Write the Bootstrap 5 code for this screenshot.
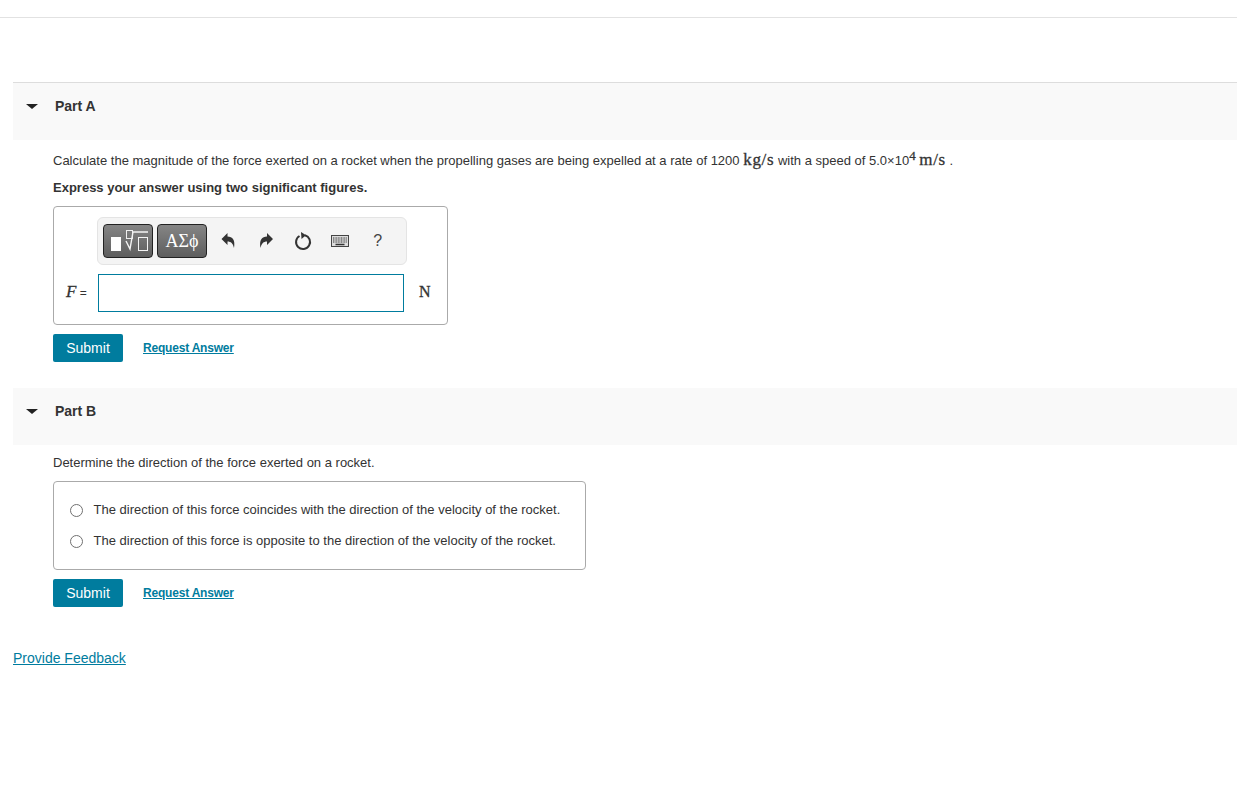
<!DOCTYPE html>
<html lang="en">
<head>
<meta charset="utf-8">
<title>Part A and Part B</title>
<link href="https://cdn.jsdelivr.net/npm/bootstrap@5.3.0/dist/css/bootstrap.min.css" rel="stylesheet">
<style>
body{font-family:"Liberation Sans",Arial,sans-serif;font-size:13px;line-height:18px;color:#333;background:#fff;height:790px;overflow:hidden}
.top-rule{height:18px;border-bottom:1px solid #e2e2e2}
.sheet{padding:64px 0 0 13px}
.part-head{height:58px;background:#f9f9f9;padding:14px 0 0 13px;font-size:14px;font-weight:700;color:#333}
.part-a{border-top:1px solid #ddd}
.caret-mark{width:0;height:0;border-left:6px solid transparent;border-right:6px solid transparent;border-top:5px solid #222;margin-right:17px;margin-top:7px}
.part-body{padding:12px 0 0 40px}
.prompt-line{height:18px;white-space:nowrap}
.mth{font-family:"Liberation Serif",serif;font-size:17px;line-height:0;color:#333;-webkit-text-stroke:.3px #333;letter-spacing:.7px}
.sup4{font-size:13px;position:relative;top:-5px;line-height:0;letter-spacing:0}
.hint{font-weight:700;margin-top:9px}
.answer-box{width:395px;height:119px;margin-top:9px;border:1px solid #aaa;border-radius:4px;padding:10px 0 0 11px}
.toolbar{margin-left:32px;width:310px;height:48px;background:#f4f4f4;border:1px solid #e4e4e4;border-radius:6px;padding:6px 5px}
.tool-dark{height:34px;flex:none;border:1px solid #222;border-radius:4px;background:linear-gradient(#858585,#5e5e5e);color:#fff;padding:0;line-height:1}
.tool-tmpl{width:50px;margin-right:4px}
.tool-grk{width:50px;font-family:"Liberation Serif",serif;font-size:18px}
.tool-slots{margin-left:2px}
.tool-slot{width:37.5px;flex:none;display:flex;justify-content:center;align-items:center;height:34px;color:#444;font-size:16px}
.answer-row{margin-top:9px;height:38px}
.var-label{width:32px;margin-left:1px;margin-bottom:2px;font-size:12px;white-space:nowrap}
.var-label i{font-family:"Liberation Serif",serif;font-size:17px;-webkit-text-stroke:.3px #333}
.answer-input{width:306px;height:38px;flex:none;border:1px solid #007c9e;border-radius:0;background:#fff}
.unit{font-family:"Liberation Serif",serif;font-size:16px;margin-left:15px;margin-bottom:2px;color:#333;-webkit-text-stroke:.3px #333}
.act-row{margin-top:9px;height:28px}
.btn-send{width:70px;height:28px;padding:0;background:#007c9e;border:0;border-radius:2px;color:#fff;font-size:14px;font-weight:400;line-height:28px}
.btn-send:hover{background:#007c9e;color:#fff}
.req-link{margin-left:20px;font-size:12px;letter-spacing:-.2px;font-weight:700;color:#007c9e;text-decoration:underline}
.part-b{margin-top:26px;height:57px}
.q-text{margin-top:-3px}
.choice-box{width:533px;height:89px;margin-top:9px;border:1px solid #aaa;border-radius:4px;padding:19px 0 0 16px}
.choice-line{height:31px;display:flex;align-items:flex-start}
.radio-mark{width:13px;height:13px;margin:3px 10.5px 0 0;border:1.5px solid #707070;border-radius:50%;flex:none}
.feedback{display:block;margin:41px 0 0 0;font-size:14px;line-height:20px;color:#007c9e;text-decoration:underline}
</style>
</head>
<body>
<div class="top-rule"></div>
<div class="sheet">
  <div class="part-head part-a d-flex align-items-start"><span class="caret-mark"></span><span>Part A</span></div>
  <div class="part-body">
    <div class="prompt-line">Calculate the magnitude of the force exerted on a rocket when the propelling gases are being expelled at a rate of 1200 <span class="mth">kg/s</span> with a speed of 5.0×10<span class="mth sup4">4</span> <span class="mth">m/s</span> .</div>
    <div class="hint">Express your answer using two significant figures.</div>
    <div class="answer-box">
      <div class="toolbar d-flex">
        <button type="button" class="tool-dark tool-tmpl" aria-label="Templates">
          <svg width="48" height="32" viewBox="0 0 48 32"><rect x="7" y="12" width="10" height="14" fill="#fff"/><rect x="22.500" y="5.500" width="6" height="8" fill="none" stroke="#f0f0f0"/><path d="M22 16l4 8 3-17h15" fill="none" stroke="#f4f4f4" stroke-width="1.400"/><rect x="34.500" y="12.500" width="9" height="13" fill="none" stroke="#f4f4f4"/></svg>
        </button>
        <button type="button" class="tool-dark tool-grk">ΑΣϕ</button>
        <div class="tool-slots d-flex">
          <div class="tool-slot"><svg width="20" height="16" viewBox="-3.500 0 20 16"><path d="M0 6l6-6v3.500c5 0 8 3.500 6.500 11.500-1-4.500-3-6.500-6.500-6.500V12z" fill="#333"/></svg></div>
          <div class="tool-slot"><svg width="20" height="16" viewBox="-5 0 20 16"><path d="M13 6L7 0v3.500C2 3.500-1 7 .5 15c1-4.500 3-6.500 6.500-6.500V12z" fill="#333"/></svg></div>
          <div class="tool-slot"><svg width="18" height="20" viewBox="0 0 18 20"><path d="M11 4.300A7 7 0 1 1 5.500 5" fill="none" stroke="#333" stroke-width="2"/><path d="M7 1l5 3.300-4.500 3.700z" fill="#333"/></svg></div>
          <div class="tool-slot"><svg width="18" height="12" viewBox="0 0 18 12"><rect x=".5" y=".5" width="17" height="11" fill="#ddd" stroke="#444"/><path d="M2 3h14M2 5h14M2 7h14" stroke="#333" stroke-dasharray="1 .6"/><path d="M4.500 9.500h9" stroke="#333" stroke-width="1.500"/></svg></div>
          <div class="tool-slot">?</div>
        </div>
      </div>
      <div class="answer-row d-flex align-items-center">
        <span class="var-label"><i>F</i> =</span>
        <input class="answer-input" type="text" aria-label="F">
        <span class="unit">N</span>
      </div>
    </div>
    <div class="act-row d-flex align-items-center">
      <button type="button" class="btn btn-send">Submit</button>
      <a class="req-link" href="#">Request Answer</a>
    </div>
  </div>
  <div class="part-head part-b d-flex align-items-start"><span class="caret-mark"></span><span>Part B</span></div>
  <div class="part-body">
    <div class="q-text">Determine the direction of the force exerted on a rocket.</div>
    <div class="choice-box">
      <div class="choice-line"><span class="radio-mark"></span><span>The direction of this force coincides with the direction of the velocity of the rocket.</span></div>
      <div class="choice-line"><span class="radio-mark"></span><span>The direction of this force is opposite to the direction of the velocity of the rocket.</span></div>
    </div>
    <div class="act-row d-flex align-items-center">
      <button type="button" class="btn btn-send">Submit</button>
      <a class="req-link" href="#">Request Answer</a>
    </div>
  </div>
  <a class="feedback" href="#">Provide Feedback</a>
</div>
<script src="https://cdn.jsdelivr.net/npm/bootstrap@5.3.0/dist/js/bootstrap.bundle.min.js"></script>
</body>
</html>
